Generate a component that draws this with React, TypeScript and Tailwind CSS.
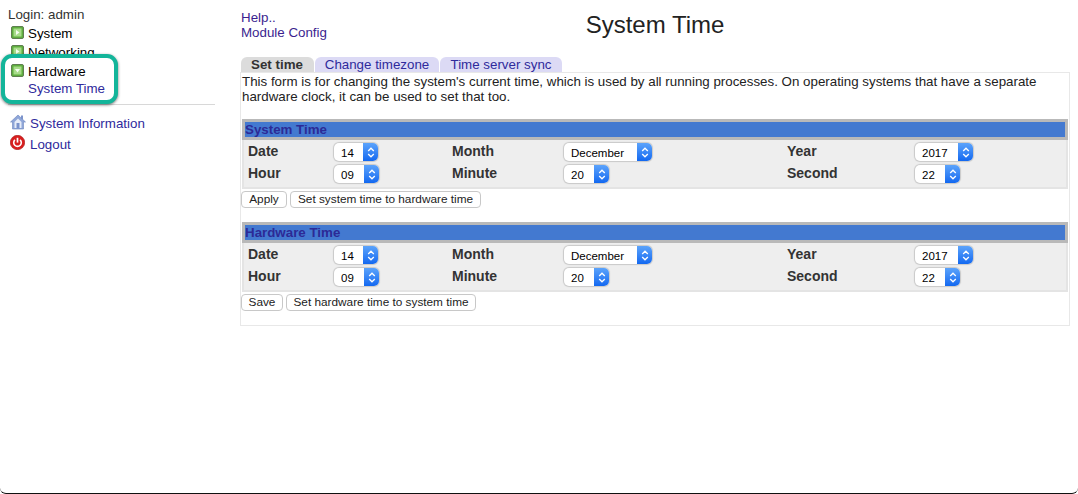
const font = "[font-family:'Liberation_Sans',Arial,sans-serif]";

function ToggleIcon({ open }: { open?: boolean }) {
  return (
    <svg width="13" height="13" viewBox="0 0 13 13" className="shrink-0">
      <rect x="0.5" y="0.5" width="12" height="12" rx="1.5" fill="#5fae3f" stroke="#5f7f50" />
      <rect x="2.5" y="2.5" width="8" height="8" fill="#a8dc8a" />
      {open ? <path d="M4 5 L9 5 L6.5 8.5 Z" fill="#f4fff0" /> : <path d="M5 4 L5 9 L8.5 6.5 Z" fill="#f4fff0" />}
    </svg>
  );
}

function HomeIcon() {
  return (
    <svg width="16" height="16" viewBox="0 0 16 16" className="shrink-0">
      <rect x="11" y="1.5" width="2" height="4" fill="#7d94cc" />
      <path d="M8 1 L15.5 8 L13.5 8 L13.5 15 L2.5 15 L2.5 8 L0.5 8 Z" fill="#8fa6d8" stroke="#6d86c0" strokeWidth="0.6" />
      <path d="M4.5 8 L8 4.5 L11.5 8 L11.5 14 L4.5 14 Z" fill="#e6ecf8" />
      <rect x="6.5" y="9" width="3" height="5.5" fill="#7b93cc" />
    </svg>
  );
}

function PowerIcon() {
  return (
    <svg width="15" height="15" viewBox="0 0 15 15" className="shrink-0">
      <circle cx="7.5" cy="7.5" r="7.2" fill="#d81f1f" stroke="#a51414" strokeWidth="0.6" />
      <path d="M4.9 4.8 A3.8 3.8 0 1 0 10.1 4.8" fill="none" stroke="#fff" strokeWidth="1.6" />
      <path d="M7.5 2.8 L7.5 7.6" stroke="#fff" strokeWidth="1.7" />
    </svg>
  );
}

function Select({ value, width }: { value: string; width: string }) {
  return (
    <div className={`ml-[1px] mt-[1px] flex h-[18px] items-stretch rounded-[5px] bg-white shadow-[0_0_1px_1px_rgba(0,0,0,0.16)] ${width}`}>
      <span className="flex-1 pl-[7px] text-[11.5px] leading-[20px] text-black">{value}</span>
      <span className="flex w-[15px] items-center justify-center rounded-r-[5px] bg-gradient-to-b from-[#5ba3fb] to-[#1168f0]">
        <svg width="8" height="13" viewBox="0 0 8 13">
          <path d="M1.2 5 L4 2.2 L6.8 5 M1.2 8 L4 10.8 L6.8 8" fill="none" stroke="#fff" strokeWidth="1.3" />
        </svg>
      </span>
    </div>
  );
}

function Label({ children }: { children: string }) {
  return <span className="text-[14px] font-bold leading-[18px] text-[#333]">{children}</span>;
}

function Btn({ children, width }: { children: string; width: string }) {
  return (
    <button className={`h-[17px] rounded-[4px] border border-[#c8c8c8] bg-white text-center text-[11.8px] leading-[15px] text-[#222] ${width}`}>
      {children}
    </button>
  );
}

function TimeSection({ title, buttons }: { title: string; buttons: [string, string][] }) {
  return (
    <div>
      <div className="mx-[1px] h-[21px] border-[3px] border-[#b9b9b9] bg-[#4379d0] text-[13.33px] font-bold leading-[16px] text-[#2c2a96]">
        {title}
      </div>
      <div className="mx-[1px] grid h-[49px] grid-cols-[85px_119px_111px_224px_127px_1fr] content-start gap-y-[3px] border-2 border-t-0 border-[#e4e4e4] bg-[#eeeeee] pl-[4px] pt-[2px]">
        <Label>Date</Label>
        <Select value="14" width="w-[44px]" />
        <Label>Month</Label>
        <Select value="December" width="w-[88px]" />
        <Label>Year</Label>
        <Select value="2017" width="w-[58px]" />
        <Label>Hour</Label>
        <Select value="09" width="w-[45px]" />
        <Label>Minute</Label>
        <Select value="20" width="w-[45px]" />
        <Label>Second</Label>
        <Select value="22" width="w-[45px]" />
      </div>
      <div className="flex gap-[3px] pt-[2px]">
        {buttons.map(([text, w]) => (
          <Btn key={text} width={w}>{text}</Btn>
        ))}
      </div>
    </div>
  );
}

export default function App() {
  return (
    <div className={`${font} flex h-[494px] w-[1078px] overflow-hidden rounded-b-[6px] border-b border-[#111] bg-white`}>
      <aside className="relative w-[240px] shrink-0 pl-[8px] pt-[7px] text-[13.33px] leading-[16px] text-[#222]">
        <div className="text-[#333]">Login: admin</div>
        <div className="mt-[3px] flex h-[19px] items-start gap-[4px] pl-[3px] text-black">
          <ToggleIcon />
          <span>System</span>
        </div>
        <div className="flex h-[18px] items-start gap-[4px] pl-[3px] text-black">
          <ToggleIcon />
          <span>Networking</span>
        </div>
        <div className="absolute left-[1px] top-[54px] h-[50px] w-[117px] rounded-[11px] border-[4px] border-[#13b59a] bg-white pl-[6px] pt-[6px] shadow-[0_1px_3px_rgba(0,0,0,0.55)]">
          <div className="flex h-[17px] items-start gap-[4px] text-black">
            <ToggleIcon open />
            <span>Hardware</span>
          </div>
          <div className="pl-[17px] text-[#2f2a9c]">System Time</div>
        </div>
        <div className="mt-[41px] mr-[25px] border-t border-[#d8d8d8]" />
        <div className="mt-[9px] flex h-[21px] items-start gap-[4px] pl-[2px] text-[#2f2a9c]">
          <HomeIcon />
          <span className="mt-[2px]">System Information</span>
        </div>
        <div className="flex h-[20px] items-start gap-[5px] pl-[2px] text-[#2f2a9c]">
          <PowerIcon />
          <span className="mt-[2px]">Logout</span>
        </div>
      </aside>

      <main className="w-[830px] shrink-0">
        <header className="relative h-[50px] pl-[1px] pt-[10px] text-[13.33px] leading-[15px] text-[#3b1f8f]">
          <div>Help..</div>
          <div>Module Config</div>
          <h1 className="absolute left-0 right-0 top-[10px] text-center text-[24px] font-normal leading-[30px] text-[#222]">
            System Time
          </h1>
        </header>
        <nav className="mt-[7px] flex h-[15px] gap-[1px] pl-[1px] text-[13.33px] leading-[15px]">
          <span className="w-[73px] rounded-t-[6px] bg-[#dcdcdc] pr-[1px] text-center font-bold text-[#333]">Set time</span>
          <span className="w-[124px] rounded-t-[6px] bg-[#dcdaf5] text-center text-[#2f2a9c]">Change timezone</span>
          <span className="w-[122px] rounded-t-[6px] bg-[#dcdaf5] text-center text-[#2f2a9c]">Time server sync</span>
        </nav>
        <section className="h-[254px] border border-[#e8e8e8]">
          <p className="pl-[1px] pt-[1px] text-[13.33px] leading-[15px] text-[#222]">
            This form is for changing the system's current time, which is used by all running processes. On operating systems that have a separate hardware clock, it can be used to set that too.
          </p>
          <div className="mt-[15px] flex flex-col gap-[14px]">
            <TimeSection title="System Time" buttons={[["Apply", "w-[46px]"], ["Set system time to hardware time", "w-[191px]"]]} />
            <TimeSection title="Hardware Time" buttons={[["Save", "w-[42px]"], ["Set hardware time to system time", "w-[190px]"]]} />
          </div>
        </section>
      </main>
    </div>
  );
}
